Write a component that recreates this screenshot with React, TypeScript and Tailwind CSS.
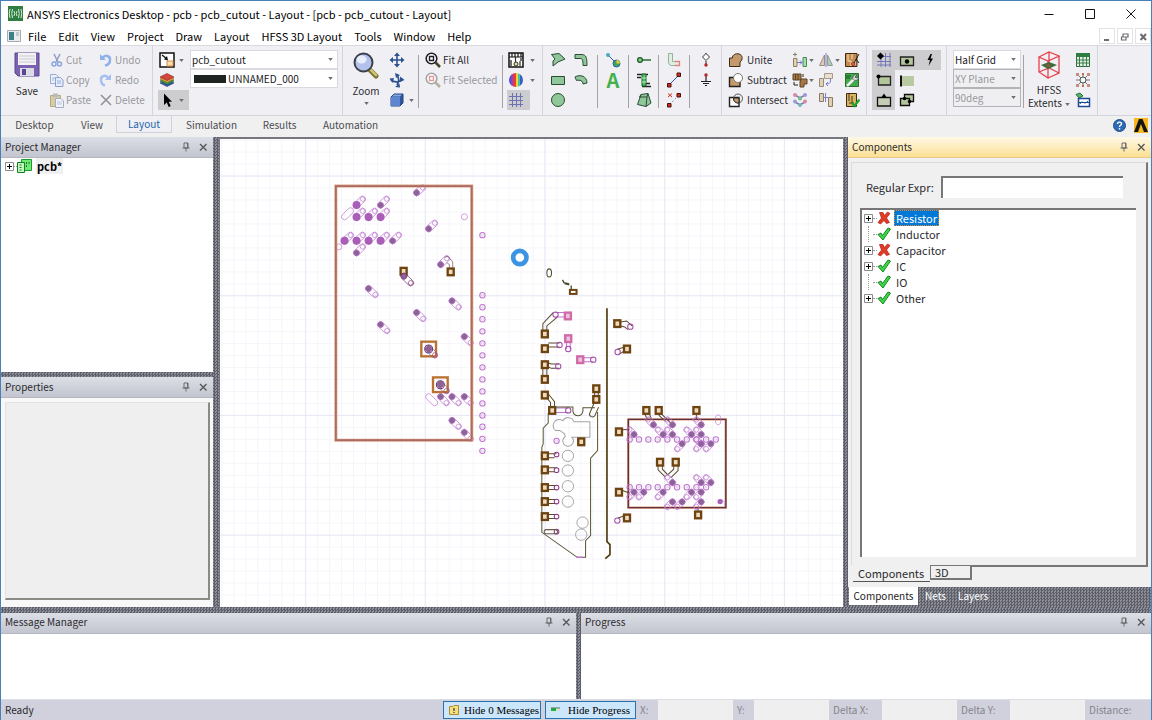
import type { ReactNode } from "react";
import { clsx } from "clsx";

/* ---------- shared bits ---------- */

function Glyph({
  children,
  className = "size-4",
  box = "0 0 16 16",
}: {
  children: ReactNode;
  className?: string;
  box?: string;
}) {
  return (
    <svg
      aria-hidden="true"
      className={clsx("block shrink-0", className)}
      fill="none"
      viewBox={box}
    >
      {children}
    </svg>
  );
}

function Caret({ className = "w-[5px] h-[3px]" }: { className?: string }) {
  return (
    <Glyph box="0 0 6 4" className={className}>
      <path d="M0 0H6L3 4Z" fill="#6d6d6d" />
    </Glyph>
  );
}

function Divider({ short = false }: { short?: boolean }) {
  return (
    <div
      className={clsx(
        "w-px shrink-0",
        short ? "mt-[9px] h-[53px] bg-[#a3a3a6]" : "h-[69px] bg-[#d3d4dc]",
      )}
    />
  );
}

function Splitter({
  className,
  children,
}: {
  className?: string;
  children?: ReactNode;
}) {
  return (
    <div
      className={clsx(
        "bg-[image:repeating-conic-gradient(#5d5e68_0_25%,#8c8f9a_0_50%)] bg-[size:3px_3px]",
        className,
      )}
    >
      {children}
    </div>
  );
}

function PanelHeader({
  title,
  active = false,
}: {
  title: string;
  active?: boolean;
}) {
  return (
    <div
      className={clsx(
        "flex h-[21px] shrink-0 items-center border-b pr-[5px] pb-px pl-1 text-[10px]",
        active
          ? "border-[#e8c987] bg-linear-to-b from-[#fff8e4] to-[#fcdf93]"
          : "border-[#b4b6c0] bg-linear-to-b from-[#dcdfe6] to-[#c3c5cf]",
      )}
    >
      <h2 className="flex-1 leading-4">{title}</h2>
      <button aria-label={`Pin ${title}`} className="mr-[7px]" type="button">
        <Glyph box="0 0 10 10" className="size-[10px]">
          <path d="M3 1H7V6H3ZM1.500 6H8.500M5 6V9.500" stroke="#6a6a6a" />
          <path d="M6.500 1V6" stroke="#6a6a6a" />
        </Glyph>
      </button>
      <button aria-label={`Close ${title}`} type="button">
        <Glyph box="0 0 10 10" className="size-[10px]">
          <path d="M2 2L8.500 8.500M8.500 2L2 8.500" stroke="#555" strokeWidth="1.300" />
        </Glyph>
      </button>
    </div>
  );
}

/* ---------- ribbon ---------- */

function Stack({
  children,
  className,
}: {
  children: ReactNode;
  className?: string;
}) {
  return (
    <div className={clsx("flex shrink-0 flex-col pt-1", className)}>
      {children}
    </div>
  );
}

function Tool({
  label,
  icon,
  text,
  menu = false,
  on = false,
  disabled = false,
  className = "gap-[3px]",
}: {
  label: string;
  icon: ReactNode;
  text?: boolean;
  menu?: boolean;
  on?: boolean;
  disabled?: boolean;
  className?: string;
}) {
  return (
    <button
      aria-label={label}
      className={clsx(
        "flex h-5 items-center whitespace-nowrap",
        on && "bg-[#cdcdcf]",
        disabled && "text-[#98989d]",
        className,
      )}
      disabled={disabled}
      type="button"
    >
      {icon}
      {text ? <span>{label}</span> : null}
      {menu ? <Caret /> : null}
    </button>
  );
}

const GREEN = "#8fc79a";
const DARK = "#2c4b34";
const TAN = "#c49a6c";

const SaveIcon = (
  <Glyph box="0 0 26 26" className="size-[26px]">
    <path d="M1 2H25V25H4L1 22Z" fill="#7a62b0" stroke="#5b4791" />
    <path d="M4 2H22V14H4Z" fill="#f3f3f6" />
    <path d="M5 5H21M5 8H21M5 11H21" stroke="#c9c9d2" />
    <path d="M6 17H20V25H6Z" fill="#dcdce6" />
    <path d="M8 18H12V24H8Z" fill="#5b4791" />
  </Glyph>
);

const CutIcon = (
  <Glyph>
    <path d="M5 2L9 10M11 2L7 10" stroke="#8e9dc6" strokeWidth="1.500" />
    <circle cx="5" cy="12" r="2" stroke="#8aa6dd" strokeWidth="1.500" />
    <circle cx="10.500" cy="12" r="2" stroke="#8aa6dd" strokeWidth="1.500" />
  </Glyph>
);

const CopyIcon = (
  <Glyph>
    <path d="M1.500 2.500H7L9 4.500V11.500H1.500Z" fill="#edf1fa" stroke="#9bacd0" />
    <path d="M6.500 5.500H11.500L14 8V14.500H6.500Z" fill="#e4ebfa" stroke="#8ba0cd" />
    <path d="M8 9H12M8 11H12M3 6H6M3 8H5" stroke="#9bb0dc" />
  </Glyph>
);

const PasteIcon = (
  <Glyph>
    <path d="M1.500 3.500H11.500V14.500H1.500Z" fill="#d9cba4" stroke="#b7a77d" />
    <path d="M4 1.500H9V5H4Z" fill="#b9b9be" />
    <path d="M6.500 6.500H12L14.500 9V15.500H6.500Z" fill="#f1f4fb" stroke="#a5adc4" />
    <path d="M8 10H13M8 12H13" stroke="#b9c3da" />
  </Glyph>
);

const UndoIcon = (
  <Glyph>
    <path d="M2 2V8H8Z" fill="#8fb0e8" />
    <path d="M4.500 6C7 2.500 12.500 3.500 12 8C12 11 10 13 7 13.500" stroke="#8fb0e8" strokeWidth="2.500" />
  </Glyph>
);

const RedoIcon = (
  <Glyph>
    <path d="M13 2V8H7Z" fill="#a5c0ee" />
    <path d="M10.500 6C8 2.500 2.500 3.500 3 8C3 11 5 13 7 13.500" stroke="#a5c0ee" strokeWidth="2.500" />
  </Glyph>
);

const DeleteIcon = (
  <Glyph>
    <path d="M3 3L13 13M13 3L3 13" stroke="#929297" strokeWidth="1.600" />
  </Glyph>
);

const ActiveCellIcon = (
  <Glyph>
    <path d="M1 1H15V15H1Z" fill="#fff" stroke="#111" strokeWidth="1.500" />
    <path d="M8 9H14V14H8Z" fill="#fce0bd" stroke="#e88a35" />
    <path d="M3 3L8 7" stroke="#111" strokeWidth="1.500" />
    <path d="M9 8.500L5 7.500L8 4Z" fill="#111" />
  </Glyph>
);

const LayersIcon = (
  <Glyph>
    <path d="M8 7.500L15 11L8 14.500L1 11Z" fill="#3355a8" stroke="#23366b" strokeWidth="0.600" />
    <path d="M8 5.500L15 9L8 12.500L1 9Z" fill="#3e9a4d" stroke="#205c2c" strokeWidth="0.600" />
    <path d="M8 3.500L15 7L8 10.500L1 7Z" fill="#e7a23d" stroke="#8c5f1c" strokeWidth="0.600" />
    <path d="M8 1.500L15 5L8 8.500L1 5Z" fill="#d8473c" stroke="#7c231c" strokeWidth="0.600" />
  </Glyph>
);

const CursorIcon = (
  <Glyph>
    <path d="M5 1.500V13L7.800 10.500L9.700 15L11.700 14L9.700 9.800H13Z" fill="#000" />
  </Glyph>
);

const ZoomIcon = (
  <Glyph box="0 0 28 28" className="size-7">
    <path d="M17 18L24 25" stroke="#7a7436" strokeWidth="5" strokeLinecap="round" />
    <path d="M18 18L24 24" stroke="#cfc46f" strokeWidth="2.500" strokeLinecap="round" />
    <circle cx="11.500" cy="11.500" r="9" fill="#b3c2ec" stroke="#3c3f4c" strokeWidth="2" />
    <ellipse cx="9.500" cy="8.500" rx="5" ry="4" fill="#e9eefb" />
  </Glyph>
);

const PanIcon = (
  <Glyph>
    <path d="M8 3V13M3 8H13" stroke="#2b5291" strokeWidth="1.600" />
    <path d="M8 0.500L11 4H5ZM8 15.500L11 12H5ZM0.500 8L4 5V11ZM15.500 8L12 5V11Z" fill="#2b5291" />
  </Glyph>
);

const RotateIcon = (
  <Glyph>
    <path d="M8 3C10 6 10 10 8 13M2 8C6 11 11 10 14 7" stroke="#2b5291" strokeWidth="1.700" />
    <path d="M6 1L11 3L7 6ZM15.500 8L11 4.500V10ZM0.500 6.500L5 6L3.500 11ZM6 15L10.500 11.500L11 15.500Z" fill="#2b5291" />
  </Glyph>
);

const CubeIcon = (
  <Glyph>
    <path d="M2 5L5 2H14V11L11 14H2Z" fill="#2f5699" stroke="#25427b" />
    <path d="M2 5H11V14H2Z" fill="#5c86d2" />
    <path d="M3 4.500L5 2.500H13L11 4.500Z" fill="#86a8e2" />
  </Glyph>
);

function FitIcon({ muted = false }: { muted?: boolean }) {
  const ink = muted ? "#a3a3a8" : "#1e1e24";
  return (
    <Glyph>
      <circle cx="6.500" cy="6.500" r="5.300" fill="#fff" stroke={ink} strokeWidth="1.600" />
      <path d="M4.500 4.500H8.500V8.500H4.500Z" stroke={muted ? "#e09a9a" : ink} strokeWidth="1.400" />
      <path d="M10.500 10.500L15 15" stroke={muted ? "#b5b2a2" : "#4c4628"} strokeWidth="2.600" />
    </Glyph>
  );
}

const DisplayIcon = (
  <Glyph>
    <path d="M1 1H15V15H1Z" fill="#fff" stroke="#111" strokeWidth="1.500" />
    <path d="M1 5H15M4 1V5M7 1V5M10 1V5M13 1V5M3 8V14M13 6V9" stroke="#111" strokeWidth="1.200" />
    <circle cx="8" cy="12" r="2" fill="#e7df78" stroke="#333" />
    <path d="M7.500 5V10M12 9V14" stroke="#333" strokeWidth="1.200" />
  </Glyph>
);

const SpectrumIcon = (
  <Glyph>
    <clipPath id="spectrum">
      <circle cx="8" cy="8" r="7" />
    </clipPath>
    <g clipPath="url(#spectrum)">
      <path d="M1 1H4V15H1Z" fill="#3d4fd0" />
      <path d="M3 1H5V15H3Z" fill="#9a3fc0" />
      <path d="M5 1H8V15H5Z" fill="#e8393c" />
      <path d="M8 1H10V15H8Z" fill="#f2d43c" />
      <path d="M10 1H12V15H10Z" fill="#3fc5a0" />
      <path d="M12 1H15V15H12Z" fill="#4457c8" />
    </g>
  </Glyph>
);

const GridIcon = (
  <Glyph>
    <path d="M4.500 1V15M8.500 1V15M12.500 1V15M1 4.500H15M1 8.500H15M1 12.500H15" stroke="#6d72b4" />
  </Glyph>
);

const PolygonIcon = (
  <Glyph>
    <path d="M1.500 2.500L9 1.500L15 7L8 10L3 14V9L5 7Z" fill={GREEN} stroke={DARK} />
  </Glyph>
);
const RectIcon = (
  <Glyph>
    <path d="M1.500 4.500H14.500V12.500H1.500Z" fill={GREEN} stroke={DARK} />
  </Glyph>
);
const CircleIcon = (
  <Glyph>
    <circle cx="8" cy="8" r="6.500" fill={GREEN} stroke={DARK} />
  </Glyph>
);
const PipeIcon = (
  <Glyph>
    <path d="M2 2.500H9C13 3 14 5 14 13.500H10C10 8 9.500 6.500 7 6.500H2Z" fill={GREEN} stroke={DARK} />
  </Glyph>
);
const ArcIcon = (
  <Glyph>
    <path d="M2 5C7 2 14 4 14 11L10 12C10 9 7 7.500 3.500 8.500Z" fill={GREEN} stroke={DARK} />
  </Glyph>
);
const MeasureIcon = (
  <Glyph>
    <path d="M3 3L11 11" stroke="#355b8c" />
    <circle cx="3" cy="3" r="2" fill="#4ba6c8" />
    <circle cx="11.500" cy="11.500" r="3.500" fill="#3fa557" stroke="#2c62b5" />
    <path d="M11.500 11.500V8A3.500 3.500 0 0 1 15 11.500Z" fill="#e7c93b" />
  </Glyph>
);
const TextIcon = (
  <span aria-hidden="true" className="text-[20px] leading-5 font-bold text-[#45b04f]">
    A
  </span>
);
const PinIcon = (
  <Glyph>
    <path d="M5 8H15" stroke="#2d6b35" strokeWidth="1.500" />
    <circle cx="4" cy="8" r="2.400" fill="#7fd285" stroke="#24582c" strokeWidth="1.300" />
  </Glyph>
);
const ViaIcon = (
  <Glyph>
    <path d="M1 2.500H12M6 14.500H15M1 5.500H5M10 11.500H14" stroke="#222" strokeWidth="1.300" />
    <path d="M6 2H10V14H6Z" fill="#48c35e" stroke="#1f5c2c" />
    <path d="M6 6H10M6 10H10" stroke="#c3f0c9" />
  </Glyph>
);
const BoxIcon = (
  <Glyph>
    <path d="M5 2.500L12 1.500L15 11L10 14.500L1.500 12.500Z" fill={GREEN} stroke={DARK} />
    <path d="M5 2.500L3.500 5H11L12 1.500M11 5L10 14.500" stroke={DARK} />
  </Glyph>
);
const CornerIcon = (
  <Glyph>
    <path d="M2.500 1.500H6.500V9.500H13.500V13.500H5Q2.500 13 2.500 10Z" fill="#dff0e2" stroke="#8fb497" />
    <path d="M9 9.500H13.500V13.500H9" stroke="#e48080" strokeWidth="1.300" />
  </Glyph>
);
const SegmentIcon = (
  <Glyph>
    <path d="M3 13L13 3" stroke="#3554a8" />
    <path d="M1.500 11.500H5V15H1.500ZM11 1H14.500V4.500H11Z" fill="#d1301f" stroke="#411" />
  </Glyph>
);
const BreakIcon = (
  <Glyph>
    <path d="M2 1.500L6 5M6 1.500L2 5" stroke="#d1301f" />
    <path d="M1.500 11.500H5V15H1.500ZM11 1.500H14.500V5H11Z" fill="#d1301f" stroke="#411" />
    <path d="M6 10L10 6" stroke="#8d9ac8" strokeDasharray="2 2" />
  </Glyph>
);
const PortIcon = (
  <Glyph>
    <path d="M8 1V2M8 9V13" stroke="#222" />
    <path d="M8 1.500L11.500 5L8 8.500L4.500 5Z" fill="#fff" stroke="#333" />
    <circle cx="8" cy="13" r="1.700" fill="#b3262b" />
  </Glyph>
);
const GroundIcon = (
  <Glyph>
    <path d="M8 3V9M3 9.500H13M5 11.500H11M7 13.500H9" stroke="#222" strokeWidth="1.200" />
    <circle cx="8" cy="3" r="1.700" fill="#b3262b" />
  </Glyph>
);
const UniteIcon = (
  <Glyph>
    <path d="M1.500 6H4.500C4 3 8 1 11 2C15 3 15 8 12 10V14.500H1.500Z" fill={TAN} stroke="#3a2a18" />
  </Glyph>
);
const SubtractIcon = (
  <Glyph>
    <path d="M1.500 5.500H12V14.500H1.500Z" fill={TAN} stroke="#222" strokeWidth="1.400" />
    <circle cx="10" cy="6" r="4.500" fill="#fff" stroke="#777" />
  </Glyph>
);
const IntersectIcon = (
  <Glyph>
    <path d="M1.500 5.500H11V14.500H1.500Z" fill="#fff" stroke="#222" strokeWidth="1.400" />
    <circle cx="10" cy="6.500" r="4.500" stroke="#555" />
    <path d="M5.500 6H11V11C7 11 5.500 9 5.500 6Z" fill={TAN} stroke="#222" />
  </Glyph>
);
const MoveIcon = (
  <Glyph>
    <path d="M1.500 6.500H5V14.500H1.500ZM1 2.500H5M3 0.500V4.500" fill="#e9d3b2" stroke="#8a7c68" />
    <path d="M11 5.500H14.500V14.500H11Z" fill="#a4dcae" stroke="#4b8a57" />
    <path d="M5 10.500H10M8 8.500L10 10.500L8 12.500" stroke="#6e74cf" />
  </Glyph>
);
const ReplicateIcon = (
  <Glyph>
    <path d="M1 2H9V8H1Z" fill="#a57848" stroke="#5f4426" />
    <path d="M3.500 2V8M6 2V8" stroke="#5f4426" />
    <path d="M9 7H15V12H12V15H8V10Z" fill="#a57848" stroke="#5f4426" />
    <path d="M2 10V13H6M11 2V5" stroke="#222" />
  </Glyph>
);
const NetIcon = (
  <Glyph>
    <path d="M3 3L8 6L13 3M3 10L8 13L13 10" stroke="#77a" strokeWidth="1.500" />
    <circle cx="3" cy="3" r="2" fill="#d88ba0" />
    <circle cx="13" cy="3" r="2" fill="#9a9ad8" />
    <circle cx="8" cy="6.500" r="2" fill="#77b88a" />
    <circle cx="3" cy="9.500" r="2" fill="#9a9ad8" />
    <circle cx="13" cy="9.500" r="2" fill="#d88ba0" />
    <circle cx="8" cy="13" r="2" fill="#77b8b8" />
  </Glyph>
);
const MirrorIcon = (
  <Glyph>
    <path d="M6.500 3V13.500H1.500Z" fill="#ddcbb8" stroke="#9d8d83" />
    <path d="M9.500 3V13.500H14.500Z" fill="#b9c9b9" stroke="#8b9d93" />
    <path d="M8 1V15" stroke="#7b7fd0" />
  </Glyph>
);
const TurnIcon = (
  <Glyph>
    <path d="M6.500 1.500H14.500V6.500H6.500Z" fill="#eadfcd" stroke="#a39a8c" />
    <path d="M1.500 6.500H5.500V14.500H1.500Z" fill="#e2d0b5" stroke="#9a8b76" />
    <path d="M12.500 7V9C12.500 11 11 12 8 12M10 10L8 12L10 14" stroke="#7b7fd0" />
  </Glyph>
);
const AlignIcon = (
  <Glyph>
    <path d="M1.500 1.500H5.500V9.500H1.500Z" fill="#e2d0b5" stroke="#8a7c68" />
    <path d="M10.500 5.500H14.500V14.500H10.500Z" fill="#e2d0b5" stroke="#8a7c68" />
    <path d="M7.500 1V10M6 5.500H10" stroke="#7b7fd0" />
  </Glyph>
);
const CutoutIcon = (
  <Glyph>
    <path d="M1.500 1.500H13V14.500H1.500Z" fill="#c48d4e" stroke="#3d2a16" />
    <path d="M4 2V9H7V14M8 2V7M11 9V13" stroke="#f2dfbd" />
    <path d="M15 2L10 11M12 7L15 11" stroke="#222" />
    <circle cx="9" cy="12" r="1.500" stroke="#b3262b" />
  </Glyph>
);
const RepairIcon = (
  <Glyph>
    <path d="M1.500 1.500H14.500V14.500H1.500Z" fill="#43a94a" stroke="#2a6e30" />
    <path d="M3 14L10 7" stroke="#eee" strokeWidth="2.500" />
    <path d="M9 8C8 4 11 2 13 3L11 5L12 6L14 5C15 8 12 9 10 8" fill="#ddd" stroke="#444" strokeWidth="0.700" />
    <path d="M2 4H7M2 6H6" stroke="#1c4d20" />
  </Glyph>
);
const ValidateIcon = (
  <Glyph>
    <path d="M2.500 1.500H12.500V14.500H2.500Z" fill="#d9b45e" stroke="#3d2a16" />
    <path d="M5 2V9M8 4V12M5 11H10" stroke="#4a3920" />
    <path d="M8 11L10.500 14L15.500 7.500" stroke="#1fa42c" strokeWidth="2.200" />
  </Glyph>
);
const SnapGridIcon = (
  <Glyph>
    <path d="M5 4V15M9.500 1V15M14 1V15M1 9.500H15M1 13H15M6 4.500H15" stroke="#7478b8" />
    <path d="M4.500 0.500L8 4L4.500 7.500L1 4Z" fill="#000" />
  </Glyph>
);
const SnapCenterIcon = (
  <Glyph>
    <path d="M1.500 5H14.500V13.500H1.500Z" fill="#b3c59b" stroke="#222" strokeWidth="1.300" />
    <circle cx="8" cy="9.500" r="2.200" fill="#000" />
  </Glyph>
);
const BoltIcon = (
  <Glyph>
    <path d="M8.500 2L5.500 8H8L6.500 14L11 6.500H8.500L10 2Z" fill="#000" />
  </Glyph>
);
const SnapVertexIcon = (
  <Glyph>
    <path d="M2.500 4.500H14.500V13H2.500Z" fill="#b3c59b" stroke="#222" strokeWidth="1.300" />
    <circle cx="2.500" cy="4.500" r="2" fill="#000" />
  </Glyph>
);
const SnapEdgeIcon = (
  <Glyph>
    <path d="M2 4H15V14H2Z" fill="#b9c9a1" />
    <path d="M2 3.500V14.500" stroke="#111" strokeWidth="2" />
  </Glyph>
);
const SnapMidIcon = (
  <Glyph>
    <path d="M1.500 5.500H14.500V14H1.500Z" fill="#c5cdb4" stroke="#111" strokeWidth="1.300" />
    <path d="M8 1.500L11 6H5Z" fill="#000" />
  </Glyph>
);
const SnapCrossIcon = (
  <Glyph>
    <path d="M5.500 2.500H14.500V9.500H5.500Z" fill="#b3c59b" stroke="#111" strokeWidth="1.300" />
    <path d="M1.500 6.500H10.500V13.500H1.500Z" fill="#b3c59b" stroke="#111" strokeWidth="1.300" />
    <circle cx="5.500" cy="6.500" r="1.700" fill="#000" />
    <circle cx="10.500" cy="9.500" r="1.700" fill="#000" />
  </Glyph>
);
const ExtentsIcon = (
  <Glyph box="0 0 26 28" className="h-7 w-[26px]">
    <path d="M3 6L13 1L23 5L12 10ZM3 6V21L12 27V10M12 27L23 22V5M3 21L13 17L23 22M13 1V17" stroke="#e6414a" strokeWidth="1.300" />
    <path d="M5 14L13 11L21 14L12 18Z" fill="#3b6b3a" />
    <path d="M9 14L13 13L15 15L12 16Z" fill="#8a5a3a" />
  </Glyph>
);
const TableIcon = (
  <Glyph>
    <path d="M1.500 1.500H14.500V14.500H1.500Z" fill="#e3f1e4" stroke="#2f6b3a" />
    <path d="M1 1H15V5H1Z" fill="#2f7d3f" />
    <path d="M1 8H15M1 11H15M4.500 5V15M8 5V15M11.500 5V15" stroke="#3c7c49" />
  </Glyph>
);
const StarIcon = (
  <Glyph>
    <path d="M2 2L14 14M14 2L2 14M8 1V15M1 8H15" stroke="#555" strokeWidth="0.800" />
    <circle cx="8" cy="8" r="3" fill="#f4f4f4" stroke="#555" />
    <path d="M1 1H4V4H1ZM12 1H15V4H12ZM1 12H4V15H1ZM12 12H15V15H12Z" fill="#c98a7c" />
    <path d="M7 1H9V3H7ZM7 13H9V15H7Z" fill="#b96d4d" />
  </Glyph>
);
const ReportIcon = (
  <Glyph>
    <path d="M1 2.500L5 1L8 4L4 6Z" fill="#58b768" stroke="#2c6f38" />
    <path d="M3.500 6.500H14.500V14.500H3.500Z" fill="#fff" stroke="#1d4a94" strokeWidth="1.500" />
    <path d="M5 12C7 7 9 14 13 9M4 10.500H14" stroke="#1d4a94" />
  </Glyph>
);

function Combo({
  label,
  value,
  disabled = false,
  swatch = false,
}: {
  label: string;
  value: string;
  disabled?: boolean;
  swatch?: boolean;
}) {
  return (
    <div
      className={clsx(
        "flex h-[19px] items-center border pr-1",
        disabled ? "border-[#b4b4b8] bg-[#efeff1]" : "border-[#d9d9df] bg-white",
      )}
    >
      {swatch ? <div className="mr-px ml-[3px] h-2 w-8 shrink-0 bg-[#1d2421]" /> : null}
      <select
        aria-label={label}
        className={clsx(
          "h-full min-w-0 flex-1 appearance-none truncate bg-transparent pl-px",
          disabled ? "text-[#98989d]" : "text-[#1b1b1b]",
        )}
        disabled={disabled}
      >
        <option>{value}</option>
      </select>
      <Caret />
    </div>
  );
}

function Ribbon() {
  return (
    <div className="flex h-[71px] overflow-hidden border-t border-b border-t-[#d9d9de] border-b-[#d3d4dc] bg-[#f0f0f4] text-[10px]">
      <Stack className="w-12 items-center">
        <button className="flex flex-col items-center gap-[6px] pt-px pl-1" type="button">
          {SaveIcon}
          <span>Save</span>
        </button>
      </Stack>
      <Stack className="w-[49px]">
        <Tool disabled icon={CutIcon} label="Cut" text className="gap-px" />
        <Tool disabled icon={CopyIcon} label="Copy" text className="gap-px" />
        <Tool disabled icon={PasteIcon} label="Paste" text className="gap-px" />
      </Stack>
      <Stack className="w-[54px]">
        <Tool disabled icon={UndoIcon} label="Undo" text className="gap-px" />
        <Tool disabled icon={RedoIcon} label="Redo" text className="gap-px" />
        <Tool disabled icon={DeleteIcon} label="Delete" text className="gap-px" />
      </Stack>
      <Divider />
      <Stack className="w-[37px] pl-[5px]">
        <Tool icon={ActiveCellIcon} label="Active cell" menu className="gap-1 pl-px" />
        <Tool icon={LayersIcon} label="Layers" className="pl-px" />
        <Tool icon={CursorIcon} label="Select" menu on className="w-[31px] gap-1 pl-px" />
      </Stack>
      <div className="mr-1 w-[148px] shrink-0 pt-1">
        <Combo label="Cell" value="pcb_cutout" />
        <Combo label="Layer" swatch value="UNNAMED_000" />
      </div>
      <Divider />
      <Stack className="w-[46px] items-center">
        <button className="flex flex-col items-center pt-px" type="button">
          {ZoomIcon}
          <span className="mt-1">Zoom</span>
          <Caret className="mt-[3px] h-[3px] w-[5px]" />
        </button>
      </Stack>
      <Stack className="w-[29px]">
        <Tool icon={PanIcon} label="Pan" />
        <Tool icon={RotateIcon} label="Rotate" />
        <Tool icon={CubeIcon} label="Orient" menu className="gap-1" />
      </Stack>
      <Divider short />
      <Stack className="w-[83px] pl-[6px]">
        <Tool icon={<FitIcon />} label="Fit All" text className="gap-[2px]" />
        <Tool disabled icon={<FitIcon muted />} label="Fit Selected" text className="gap-[2px]" />
      </Stack>
      <Divider short />
      <Stack className="w-[39px] pl-1">
        <Tool icon={DisplayIcon} label="Display" menu className="gap-[6px] pl-px" />
        <Tool icon={SpectrumIcon} label="Colors" menu className="gap-[6px] pl-px" />
        <Tool icon={GridIcon} label="Grid" on className="w-[23px] pl-px" />
      </Stack>
      <Divider />
      <Stack className="w-[30px] pl-[7px]">
        <Tool icon={PolygonIcon} label="Polygon" />
        <Tool icon={RectIcon} label="Rectangle" />
        <Tool icon={CircleIcon} label="Circle" />
      </Stack>
      <Stack className="w-6">
        <Tool icon={PipeIcon} label="Line" />
        <Tool icon={ArcIcon} label="Arc" />
      </Stack>
      <Divider short />
      <Stack className="w-[30px] items-center">
        <Tool icon={MeasureIcon} label="Measure" />
        <Tool icon={TextIcon} label="Text" />
      </Stack>
      <Divider short />
      <Stack className="w-[29px] items-center">
        <Tool icon={PinIcon} label="Pin" />
        <Tool icon={ViaIcon} label="Via" />
        <Tool icon={BoxIcon} label="Box" />
      </Stack>
      <Divider short />
      <Stack className="w-[30px] items-center">
        <Tool icon={CornerIcon} label="Corner" />
        <Tool icon={SegmentIcon} label="Segment" />
        <Tool icon={BreakIcon} label="Break" />
      </Stack>
      <Divider short />
      <Stack className="w-[31px] items-center">
        <Tool icon={PortIcon} label="Port" />
        <Tool icon={GroundIcon} label="Ground" />
      </Stack>
      <Divider />
      <Stack className="w-[70px] pl-[6px]">
        <Tool icon={UniteIcon} label="Unite" text />
        <Tool icon={SubtractIcon} label="Subtract" text />
        <Tool icon={IntersectIcon} label="Intersect" text />
      </Stack>
      <Stack className="w-[26px]">
        <Tool icon={MoveIcon} label="Move" menu className="gap-px" />
        <Tool icon={ReplicateIcon} label="Replicate" menu className="gap-px" />
        <Tool icon={NetIcon} label="Net" />
      </Stack>
      <Stack className="w-[26px]">
        <Tool icon={MirrorIcon} label="Mirror" menu className="gap-px" />
        <Tool icon={TurnIcon} label="Turn" />
        <Tool icon={AlignIcon} label="Align" />
      </Stack>
      <Stack className="w-[22px]">
        <Tool icon={CutoutIcon} label="Cutout" />
        <Tool icon={RepairIcon} label="Repair" />
        <Tool icon={ValidateIcon} label="Validate" />
      </Stack>
      <Divider />
      <div className="grid w-[79px] shrink-0 auto-rows-[20px] grid-cols-[23px_23px_23px] pt-1 pl-[5px]">
        <Tool icon={SnapGridIcon} label="Snap to grid" on className="justify-center" />
        <Tool icon={SnapCenterIcon} label="Snap to center" on className="justify-center" />
        <Tool icon={BoltIcon} label="Snap to port" on className="justify-center" />
        <Tool icon={SnapVertexIcon} label="Snap to vertex" on className="justify-center" />
        <Tool icon={SnapEdgeIcon} label="Snap to edge" className="justify-center" />
        <span />
        <Tool icon={SnapMidIcon} label="Snap to midpoint" on className="justify-center" />
        <Tool icon={SnapCrossIcon} label="Snap to crossing" className="justify-center" />
      </div>
      <Divider />
      <div className="mr-[2px] ml-[6px] w-[68px] shrink-0 pt-1">
        <Combo label="Grid step" value="Half Grid" />
        <Combo disabled label="Plane" value="XY Plane" />
        <Combo disabled label="Angle" value="90deg" />
      </div>
      <Divider short />
      <Stack className="w-[50px] items-center">
        <button className="flex flex-col items-center gap-1 pt-px" type="button">
          {ExtentsIcon}
          <span className="text-center leading-[13px] whitespace-nowrap">
            HFSS
            <br />
            Extents
            <span className="ml-[3px] inline-block align-middle">
              <Caret />
            </span>
          </span>
        </button>
      </Stack>
      <Stack className="w-[23px] pl-px">
        <Tool icon={TableIcon} label="Table" />
        <Tool icon={StarIcon} label="Radiation" />
        <Tool icon={ReportIcon} label="Report" />
      </Stack>
      <Divider />
    </div>
  );
}

/* ---------- board drawing ---------- */

type Pt = [number, number];
type Seg = [number, number, number, number];

const VIOLET = "#bd72cf";
const BROWN = "#6d4310";

// Slot between two pads, the first one filled
function Slot({
  seg: [x1, y1, x2, y2],
  open = false,
  color = VIOLET,
}: {
  seg: Seg;
  open?: boolean;
  color?: string;
}) {
  const len = Math.hypot(x2 - x1, y2 - y1);
  const angle = (Math.atan2(y2 - y1, x2 - x1) * 180) / Math.PI;
  return (
    <g
      stroke={color}
      strokeWidth="2"
      transform={`translate(${x1} ${y1}) rotate(${angle})`}
    >
      <rect height="18" rx="9" width={len + 18} x="-9" y="-9" />
      {open ? null : <circle fill="#8a6494" r="9" />}
      {open ? null : <circle cx={len} r="7" />}
    </g>
  );
}

function Via({ at: [x, y] }: { at: Pt }) {
  return (
    <g stroke={VIOLET} strokeWidth="3">
      <circle cx={x} cy={y} r="8" />
      <circle cx={x} cy={y} r="3" stroke="#dcbce6" strokeWidth="2" />
    </g>
  );
}

function Pad({ at: [x, y], pink = false }: { at: Pt; pink?: boolean }) {
  return (
    <rect
      fill={pink ? "#eec0e2" : "#efdcc0"}
      height="20"
      stroke={pink ? "#cf6aa6" : BROWN}
      strokeWidth="7"
      width="18"
      x={x - 9}
      y={y - 10}
    />
  );
}

const leftSlots: Seg[] = [
  [94, 90, 112, 72], [166, 90, 184, 72],
  [94, 126, 112, 108], [130, 126, 148, 108], [166, 126, 184, 108],
  [58, 197, 76, 180], [94, 197, 112, 180], [130, 197, 148, 180],
  [166, 197, 184, 180], [202, 197, 220, 180], [94, 233, 112, 215],
  [274, 53, 292, 38], [310, 161, 328, 144], [346, 268, 364, 250],
  [130, 340, 150, 358], [166, 448, 185, 466], [274, 412, 293, 430],
  [380, 377, 399, 395], [417, 484, 435, 502], [346, 664, 363, 682],
  [380, 664, 399, 682], [417, 664, 435, 682], [380, 735, 399, 753],
  [417, 771, 435, 789],
];

const leftBlobs: Pt[] = [
  [94, 90], [94, 126], [130, 126], [166, 126],
  [58, 197], [94, 197], [130, 197], [166, 197],
];

const viaColumn: Pt[] = [
  [471, 180],
  ...Array.from({ length: 14 }, (_, i): Pt => [471, 360 + i * 36 - (i > 10 ? 2 : 0)]),
];

const midPads: Pt[] = [
  [133, 311], [133, 355], [133, 403], [133, 447], [133, 494], [155, 540],
  [287, 475], [287, 507], [350, 280], [379, 356],
];

const lowPads: Pt[] = [
  [152, 184], [43, 226], [43, 268], [43, 321], [43, 363], [43, 408],
  [265, 154], [265, 335], [289, 412], [502, 403],
  [347, 90], [384, 90], [497, 90], [388, 245], [435, 245],
];

const rightSlots: Seg[] = [
  [368, 133, 353, 118], [425, 133, 410, 118], [511, 133, 497, 118],
  [310, 162, 297, 148], [397, 162, 382, 148], [425, 162, 410, 148],
  [482, 162, 468, 148], [511, 162, 497, 148], [454, 190, 440, 205],
  [511, 190, 497, 205], [540, 190, 526, 205], [511, 190, 497, 177],
  [425, 306, 410, 291], [511, 306, 497, 291], [540, 306, 526, 291],
  [310, 335, 297, 349], [339, 335, 325, 349], [397, 335, 382, 349],
  [482, 335, 468, 349], [511, 335, 497, 349], [425, 364, 410, 378],
  [454, 364, 440, 378], [511, 364, 497, 378],
];

const rightVias: Pt[] = [
  ...[297, 325, 353, 381, 410, 439, 468, 497, 526, 555].map((x): Pt => [x, 177]),
  ...[297, 325, 353, 381, 410, 439, 468, 497, 526].map((x): Pt => [x, 320]),
];

const holes: Pt[] = [
  [112, 226], [112, 270], [112, 317], [112, 363], [156, 426], [152, 462],
];

function BoardView() {
  return (
    <svg
      aria-label="pcb_cutout layout"
      className="h-full min-h-0 w-full"
      fill="none"
      preserveAspectRatio="xMinYMin slice"
      role="img"
      viewBox="220 139 622 467"
    >
      <defs>
        <pattern height="11.950" id="minor" patternUnits="userSpaceOnUse" width="11.950" x="305" y="175.500">
          <path d="M0.500 0V12M0 0.500H12" stroke="#f6f5fb" />
        </pattern>
        <pattern height="119.500" id="major" patternUnits="userSpaceOnUse" width="119.500" x="305" y="175.500">
          <path d="M0.500 0V120M0 0.500H120" stroke="#e8e7f7" />
        </pattern>
      </defs>
      <rect fill="url(#minor)" height="467" width="622" x="220" y="139" />
      <rect fill="url(#major)" height="467" width="622" x="220" y="139" />

      {/* left board */}
      <g transform="translate(325 175) scale(0.33333)">
        {leftSlots.map((seg) => (
          <Slot key={seg.join()} seg={seg} />
        ))}
        {leftBlobs.map(([x, y]) => (
          <circle cx={x} cy={y} fill="#a95fb8" key={`${x},${y}`} r="12" />
        ))}
        <Slot open seg={[58, 125, 76, 107]} />
        <Slot open seg={[310, 664, 328, 682]} />
        <circle cx="417" cy="125" r="9" stroke={VIOLET} strokeWidth="2" />
        <circle cx="41" cy="215" r="9" stroke={VIOLET} strokeWidth="2" />
        {viaColumn.map((at) => (
          <Via at={at} key={at.join()} />
        ))}
        <path d="M32 33H439V794H32Z" stroke="#dca27c" strokeWidth="9" />
        <path d="M32 33H439V794H32Z" stroke="#ab6a68" strokeWidth="5" />
        <Pad at={[235, 288]} />
        <Pad at={[376, 290]} />
        <Slot color="#7d2f6c" seg={[236, 303, 256, 323]} />
        <path d="M358 246L368 244L382 260V278M364 262L372 268V278" stroke="#6b4a4a" strokeWidth="2" />
        {[[310, 521], [345, 628]].map(([x, y]) => (
          <g key={x}>
            <rect height="44" stroke="#b9722f" strokeWidth="7" width="44" x={x - 22} y={y - 22} />
            <Slot color="#a0508e" seg={[x, y, x + 18, y + 18]} />
            <circle cx={x} cy={y} r="12" stroke="#5d3a72" strokeWidth="3" />
          </g>
        ))}
      </g>

      {/* middle section */}
      <g transform="translate(500 230) scale(0.33333)">
        <ellipse cx="146" cy="128" rx="7" ry="12" stroke="#4b4b30" strokeWidth="3" />
        <path d="M186 149L190 157L206 161M192 160L206 164M212 166V176" stroke="#4b4b30" strokeWidth="4" />
        <rect height="12" stroke={BROWN} strokeWidth="6" width="20" x="208" y="179" />
        <path
          d="M127 300V280L158 247M139 300V287L171 260M143 338H177M143 350H177M127 403V447M139 403V447M143 397L152 401H175M143 409L152 414H175M143 490L162 514V530M139 503L150 516V530M282 475V507M293 475V507M281 517L268 547A8 8 0 0 0 283 555L294 530M360 275L378 272L394 287M360 287L372 290L382 298M370 351L350 357M372 362L354 372"
          stroke="#5b4a2a"
          strokeWidth="3"
        />
        <path d="M165 247H202M165 260H202M198 325V356M209 325V356M239 382H278M239 394H278M160 533H203M160 546H203" stroke={VIOLET} strokeWidth="3" />
        {[[165, 253], [177, 344], [173, 408], [203, 356], [278, 388], [203, 540], [389, 289], [351, 365]].map(([x, y]) => (
          <circle cx={x} cy={y} key={`${x},${y}`} r="8" stroke="#a448a8" strokeWidth="3" />
        ))}
        {midPads.map((at) => (
          <Pad at={at} key={at.join()} />
        ))}
        <Pad at={[202, 257]} pink />
        <Pad at={[203, 325]} pink />
        <Pad at={[239, 388]} pink />
        <path d="M319 234V933L328 942V972L314 984" stroke="#4e3c0c" strokeWidth="5" />
        <circle cx="58" cy="82" fill="#fff" r="20" stroke="#3d94e2" strokeWidth="14" />
      </g>

      {/* connector and right board */}
      <g transform="translate(530 380) scale(0.33333)">
        <path
          d="M53 96V128L38 143V190L34 200V455L140 530H165V480L180 465V233L201 210V95M65 80H127V90A15 15 0 0 0 157 92V82H193"
          stroke="#5a5230"
          strokeWidth="3"
        />
        <path d="M138 530H156" stroke="#c46ed0" strokeWidth="4" />
        <path d="M178 124H130A18 18 0 0 0 97 121A17 17 0 1 0 75 150H88L102 160L104 168A16 16 0 1 0 124 170H178Z" stroke="#a2a2a2" strokeWidth="3" />
        {holes.map(([x, y]) => (
          <circle cx={x} cy={y} key={`${x},${y}`} r="17" stroke="#7d7d7d" strokeWidth="2" />
        ))}
        <Via at={[78, 181]} />
        <path d="M52 220H78M52 232H72M52 262H78M52 274H72M52 315H78M52 327H78M52 357H78M52 369H78M52 402H78M52 414H78" stroke="#5b4a2a" strokeWidth="3" />
        {[222, 269, 321, 363, 408, 453].map((y) => (
          <circle cx="78" cy={y} key={y} r="7" stroke="#8e3b86" strokeWidth="3" />
        ))}
        <rect height="12" rx="6" stroke="#6a5a4a" strokeWidth="3" width="40" x="41" y="447" />
        <path d="M293 117H585V381H293Z" stroke="#d9996c" strokeWidth="7" />
        <path d="M293 117H585V381H293Z" stroke="#5f3046" strokeWidth="4" />
        <path
          d="M342 100L350 118M355 98L362 114M390 98L420 128M384 104L404 122M497 104V118M276 148L296 146M276 330L297 338M382 256V268L404 290M395 256V266L412 284M429 256V266L410 284M442 256V270L420 292M502 378V392M280 406L262 412"
          stroke="#5b4a2a"
          strokeWidth="3"
        />
        {rightVias.map((at) => (
          <Via at={at} key={at.join()} />
        ))}
        {rightSlots.map((seg) => (
          <Slot key={seg.join()} seg={seg} />
        ))}
        <circle cx="568" cy="363" fill="#a95fb8" r="8" />
        <path d="M572 356L582 366V378" stroke={VIOLET} strokeWidth="2" />
        <circle cx="260" cy="420" r="8" stroke="#a448a8" strokeWidth="3" />
        <ellipse cx="562" cy="118" rx="8" ry="15" stroke={VIOLET} strokeWidth="2" />
        {lowPads.map((at) => (
          <Pad at={at} key={at.join()} />
        ))}
      </g>
    </svg>
  );
}

/* ---------- component tree ---------- */

const componentTree = [
  { name: "Resistor", enabled: false, children: true },
  { name: "Inductor", enabled: true, children: false },
  { name: "Capacitor", enabled: false, children: true },
  { name: "IC", enabled: true, children: true },
  { name: "IO", enabled: true, children: false },
  { name: "Other", enabled: true, children: true },
];

const PlusBox = (
  <Glyph box="0 0 9 9" className="size-[9px]">
    <path d="M0.500 0.500H8.500V8.500H0.500Z" fill="#fff" stroke="#8b8b8b" />
    <path d="M2 4.500H7M4.500 2V7" stroke="#000" />
  </Glyph>
);

const CheckMark = (
  <Glyph box="0 0 14 14" className="size-[14px]">
    <path d="M1 7.500L4 6L5.500 8.500L11 1L13.500 2L6 13Z" fill="#3fd447" stroke="#168a22" />
  </Glyph>
);

const CrossMark = (
  <Glyph box="0 0 14 14" className="size-[14px]">
    <path d="M2.500 1.500L6 1.500L7.500 4.500L10.500 1L13 2.500L9.500 7L12.500 11.500L9.500 12.500L7 9.500L3.500 13L1 11.500L4.500 7Z" fill="#e23b27" stroke="#a81e10" strokeWidth="0.700" />
  </Glyph>
);

function ComponentsPanel() {
  return (
    <section className="flex flex-1 flex-col bg-[#f0f0f0]">
      <PanelHeader active title="Components" />
      <div className="mt-1 mr-[3px] ml-[3px] flex flex-1 flex-col border-t border-r-2 border-l border-t-[#dcdcdc] border-r-[#777] border-l-[#dcdcdc] pt-[13px] pr-[10px] pl-2">
        <div className="flex items-center pr-[13px] pl-[6px]">
          <label className="w-[75px]" htmlFor="expr">
            Regular Expr:
          </label>
          <input
            className="h-[22px] min-w-0 flex-1 border-t-2 border-l-2 border-[#77777a] bg-white px-1 outline-none"
            id="expr"
            type="text"
          />
        </div>
        <ul className="mt-[10px] mb-2 flex-1 border-t-2 border-l-2 border-[#77777a] bg-white">
          {componentTree.map((item, index) => (
            <li className="flex h-4 items-center pl-[2px]" key={item.name}>
              <span className="flex w-[13px] shrink-0 items-center">
                {item.children ? (
                  PlusBox
                ) : (
                  <span className="ml-1 h-4 w-[5px] border-l border-dotted border-[#999]" />
                )}
                <span className="h-px flex-1 border-t border-dotted border-[#999]" />
              </span>
              {item.enabled ? CheckMark : CrossMark}
              <button
                className={clsx(
                  "ml-[3px] border px-px leading-[14px]",
                  index === 0
                    ? "border-dotted border-[#e08a2a] bg-[#0078d7] text-white"
                    : "border-transparent",
                )}
                type="button"
              >
                {item.name}
              </button>
            </li>
          ))}
        </ul>
      </div>
      <div className="mr-[3px] ml-[5px] flex h-[22px] items-start">
        <button className="h-[17px] w-[77px] border-b border-[#555] text-left" type="button">
          <span className="pl-[5px]">Components</span>
        </button>
        <button className="h-[15px] w-[42px] border-t border-r-2 border-b-2 border-l border-[#777] pl-1 text-left leading-3" type="button">
          3D
        </button>
        <div className="h-[2px] flex-1 bg-[#777]" />
      </div>
    </section>
  );
}

function DockTabs() {
  return (
    <Splitter className="flex h-5 items-start text-[10px] text-white">
      <button className="ml-px h-[18px] w-[69px] bg-white text-center text-[#222]" type="button">
        Components
      </button>
      <button className="ml-[7px] h-[18px]" type="button">
        Nets
      </button>
      <button className="ml-3 h-[18px]" type="button">
        Layers
      </button>
    </Splitter>
  );
}

/* ---------- status bar ---------- */

function Coord({ id, label, width }: { id: string; label: string; width: string }) {
  return (
    <>
      <label className={clsx("shrink-0 pl-1 text-[#85858c]", width)} htmlFor={id}>
        {label}
      </label>
      <input className="h-5 w-[75px] shrink-0 bg-[#efefef]" disabled id={id} type="text" />
    </>
  );
}

function StatusBar() {
  return (
    <footer className="flex h-[22px] shrink-0 items-center border-t border-[#dcdde4] bg-[#d0d1dd] text-[10px]">
      <span className="flex-1 pl-1">Ready</span>
      <button
        className="mr-1 flex h-[18px] w-[98px] items-center border border-[#2c73ad] bg-[#cce6fb] pl-1 font-['Liberation_Serif',serif] text-[11px] whitespace-nowrap text-black"
        type="button"
      >
        <Glyph box="0 0 12 12" className="mr-1 size-3">
          <path d="M1.500 2.500H5L6 1.500H10.500V10.500H1.500Z" fill="#f5df7a" stroke="#b08d2c" />
          <path d="M6 4V7M6 8V9" stroke="#555" strokeWidth="1.500" />
        </Glyph>
        Hide 0 Messages
      </button>
      <button
        className="flex h-[18px] w-[91px] items-center border border-[#2c73ad] bg-[#cce6fb] pl-1 font-['Liberation_Serif',serif] text-[11px] whitespace-nowrap text-black"
        type="button"
      >
        <Glyph box="0 0 12 12" className="mr-[6px] size-3">
          <path d="M1 4H10V7H1Z" fill="#d5e3d5" />
          <path d="M1 4H6V7H1Z" fill="#22b13a" />
          <path d="M1 4H10" stroke="#576" />
        </Glyph>
        Hide Progress
      </button>
      <Coord id="x" label="X:" width="w-[22px]" />
      <Coord id="y" label="Y:" width="w-[21px]" />
      <Coord id="dx" label="Delta X:" width="w-[53px]" />
      <Coord id="dy" label="Delta Y:" width="w-[53px]" />
      <span className="flex-1 pl-1 text-[#85858c] sm:w-[66px] sm:flex-none">Distance:</span>
    </footer>
  );
}

/* ---------- window ---------- */

const menus = [
  "File",
  "Edit",
  "View",
  "Project",
  "Draw",
  "Layout",
  "HFSS 3D Layout",
  "Tools",
  "Window",
  "Help",
];

const ribbonTabs = ["Desktop", "View", "Layout", "Simulation", "Results", "Automation"];

export default function App() {
  return (
    <div className="flex min-h-screen flex-col border border-[#4a80b8] bg-white font-['Noto_Sans_CJK_TC','Noto_Sans',sans-serif] text-[11px] leading-4 text-[#2b2b2f]">
      <header className="flex h-[25px] items-center pl-[7px]">
        <Glyph box="0 0 15 15" className="size-[15px]">
          <path d="M0 0H15V15H0Z" fill="#2f7d42" />
          <path d="M2 3Q0.500 7.500 2 12M4.500 3Q3 7.500 4.500 12M6 5Q7.500 7.500 6 10M13 3Q14.500 7.500 13 12M10.500 3Q12 7.500 10.500 12M9 5Q7.500 7.500 9 10" stroke="#d5efd8" />
        </Glyph>
        <h1 className="flex-1 pl-1 text-black">
          ANSYS Electronics Desktop - pcb - pcb_cutout - Layout - [pcb - pcb_cutout - Layout]
        </h1>
        <button aria-label="Minimize" className="flex w-[41px] justify-center" type="button">
          <Glyph box="0 0 10 10" className="size-[10px]">
            <path d="M0.500 5.500H9.500" stroke="#111" />
          </Glyph>
        </button>
        <button aria-label="Maximize" className="flex w-[41px] justify-center" type="button">
          <Glyph box="0 0 10 10" className="size-[10px]">
            <path d="M0.500 0.500H9.500V9.500H0.500Z" stroke="#111" />
          </Glyph>
        </button>
        <button aria-label="Close" className="flex w-[41px] justify-center" type="button">
          <Glyph box="0 0 10 10" className="size-[10px]">
            <path d="M0.500 0.500L9.500 9.500M9.500 0.500L0.500 9.500" stroke="#111" />
          </Glyph>
        </button>
      </header>

      <nav className="flex h-[19px] items-center pl-[6px]">
        <Glyph box="0 0 14 12" className="mr-[7px] h-3 w-[14px]">
          <path d="M0.500 0.500H13.500V11.500H0.500Z" fill="#e8ecef" stroke="#a4adb5" />
          <path d="M2 2H7V10H2Z" fill="#3d7f84" />
          <path d="M9 3H12M9 5H12" stroke="#9aa" />
        </Glyph>
        <div className="flex flex-1 gap-3 text-black">
          {menus.map((menu) => (
            <button className="whitespace-nowrap" key={menu} type="button">
              {menu}
            </button>
          ))}
        </div>
        <div className="flex gap-[2px]">
          {["M4 11H9", "M5 5H10V8H5ZM3.500 8H8V11H3.500Z", "M4.500 5L10 11M10 5L4.500 11"].map((d, i) => (
            <button
              aria-label={["Minimize document", "Restore document", "Close document"][i]}
              className="border border-[#e2e2e4]"
              key={d}
              type="button"
            >
              <Glyph box="0 0 14 14" className="size-[14px]">
                <path d={d} stroke="#6b6b72" strokeWidth={i === 1 ? "1.200" : "2"} />
              </Glyph>
            </button>
          ))}
        </div>
      </nav>

      <Ribbon />

      <div className="flex h-[21px] items-start bg-[#f0f0f0] text-[10px] text-[#4b4b50]">
        {ribbonTabs.map((tab) => (
          <button
            className={clsx(
              "h-[17px]",
              tab === "Layout"
                ? "w-[56px] border-x border-b border-[#cfd0da] bg-[#f0f0f4] text-[#1f66ab]"
                : "",
              tab === "Desktop" && "w-[67px]",
              tab === "View" && "w-12",
              tab === "Simulation" && "w-[79px]",
              tab === "Results" && "w-[57px]",
              tab === "Automation" && "w-[85px]",
            )}
            key={tab}
            type="button"
          >
            {tab}
          </button>
        ))}
        <div className="flex-1" />
        <button aria-label="Help" className="mt-[3px] mr-2" type="button">
          <Glyph box="0 0 13 13" className="size-[13px]">
            <circle cx="6.500" cy="6.500" fill="#2d6cb5" r="6" stroke="#1d4d8a" />
            <path d="M4.500 5C4.500 2.500 8.500 2.500 8.500 4.800C8.500 6.300 6.500 6.200 6.500 8M6.500 9V10.500" stroke="#fff" strokeWidth="1.400" />
          </Glyph>
        </button>
        <button aria-label="About" className="mt-[2px] mr-[3px]" type="button">
          <Glyph box="0 0 14 15" className="h-[15px] w-[14px]">
            <path d="M0 0H14V15H0Z" fill="#f5b91f" />
            <path d="M5 1H8.500L14 14H10L7 6L4 14H0Z" fill="#141414" />
            <path d="M7 8L9 13H5Z" fill="#f5b91f" />
          </Glyph>
        </button>
      </div>

      <main className="grid flex-1 grid-cols-[212px_6px_minmax(0,1fr)_5px_303px]">
        <div className="grid grid-rows-[235fr_5px_229fr]">
          <section className="flex flex-col bg-white">
            <PanelHeader title="Project Manager" />
            <div className="flex items-center pl-1">
              {PlusBox}
              <span className="w-[3px] border-t border-dotted border-[#999]" />
              <Glyph box="0 0 15 14" className="h-[14px] w-[15px]">
                <path d="M4.500 0.500H14.500V11.500H4.500Z" fill="#6eea74" stroke="#1f9a2f" />
                <path d="M0.500 3.500H7.500V13.500H0.500Z" fill="#c5f7c5" stroke="#128021" />
                <path d="M2.500 6H5.500M2.500 8.500H5.500M2.500 11H5.500M9.500 3V8M12 3V5" stroke="#128021" strokeDasharray="2 1" />
              </Glyph>
              <button className="ml-1 bg-[#f0f0f0] px-px font-bold text-black" type="button">
                pcb*
              </button>
            </div>
          </section>
          <Splitter />
          <section className="flex flex-col bg-[#f8f8f9]">
            <PanelHeader title="Properties" />
            <div className="mt-1 mr-[3px] mb-[7px] ml-1 flex-1 border-t border-r-2 border-b-2 border-l border-t-[#e3e3e3] border-r-[#8b8b85] border-b-[#8b8b85] border-l-[#e3e3e3] bg-[#efefef]" />
          </section>
        </div>
        <Splitter />
        <div className="min-h-0 border-t-2 border-l border-[#77787f] bg-white">
          <BoardView />
        </div>
        <Splitter />
        <div className="flex flex-col">
          <ComponentsPanel />
          <DockTabs />
        </div>
      </main>

      <Splitter className="h-[6px] shrink-0" />

      <div className="grid h-[86px] shrink-0 grid-cols-[575fr_5px_570fr]">
        <section className="bg-white">
          <PanelHeader title="Message Manager" />
        </section>
        <Splitter />
        <section className="bg-white">
          <PanelHeader title="Progress" />
        </section>
      </div>

      <StatusBar />
    </div>
  );
}
